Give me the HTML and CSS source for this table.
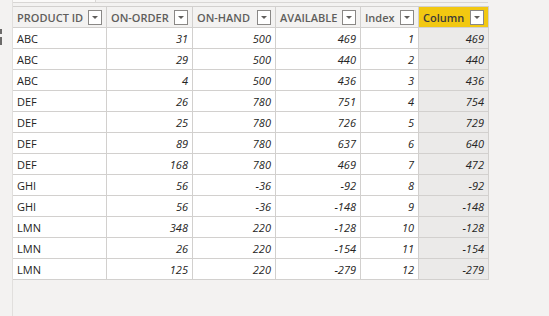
FILE: index.html
```html
<!DOCTYPE html>
<html>
<head>
<meta charset="utf-8">
<link rel="stylesheet" href="styles.css">
</head>
<body>
<div class="app">
  <div class="rail">
    <span class="rail-mark a"></span>
    <span class="rail-mark b"></span>
  </div>
  <div class="main">
    <div class="topbar"><span class="topbar-cell"></span></div>
    <div class="grid">
      <div class="hcell"><span>PRODUCT ID</span><i class="filter"></i></div>
      <div class="hcell"><span>ON-ORDER</span><i class="filter"></i></div>
      <div class="hcell"><span>ON-HAND</span><i class="filter"></i></div>
      <div class="hcell"><span>AVAILABLE</span><i class="filter"></i></div>
      <div class="hcell"><span>Index</span><i class="filter"></i></div>
      <div class="hcell sel"><span>Column</span><i class="filter"></i></div>

      <div class="cell txt">ABC</div><div class="cell num">31</div><div class="cell num">500</div><div class="cell num">469</div><div class="cell num">1</div><div class="cell num last">469</div>
      <div class="cell txt">ABC</div><div class="cell num">29</div><div class="cell num">500</div><div class="cell num">440</div><div class="cell num">2</div><div class="cell num last">440</div>
      <div class="cell txt">ABC</div><div class="cell num">4</div><div class="cell num">500</div><div class="cell num">436</div><div class="cell num">3</div><div class="cell num last">436</div>
      <div class="cell txt">DEF</div><div class="cell num">26</div><div class="cell num">780</div><div class="cell num">751</div><div class="cell num">4</div><div class="cell num last">754</div>
      <div class="cell txt">DEF</div><div class="cell num">25</div><div class="cell num">780</div><div class="cell num">726</div><div class="cell num">5</div><div class="cell num last">729</div>
      <div class="cell txt">DEF</div><div class="cell num">89</div><div class="cell num">780</div><div class="cell num">637</div><div class="cell num">6</div><div class="cell num last">640</div>
      <div class="cell txt">DEF</div><div class="cell num">168</div><div class="cell num">780</div><div class="cell num">469</div><div class="cell num">7</div><div class="cell num last">472</div>
      <div class="cell txt">GHI</div><div class="cell num">56</div><div class="cell num">-36</div><div class="cell num">-92</div><div class="cell num">8</div><div class="cell num last">-92</div>
      <div class="cell txt">GHI</div><div class="cell num">56</div><div class="cell num">-36</div><div class="cell num">-148</div><div class="cell num">9</div><div class="cell num last">-148</div>
      <div class="cell txt">LMN</div><div class="cell num">348</div><div class="cell num">220</div><div class="cell num">-128</div><div class="cell num">10</div><div class="cell num last">-128</div>
      <div class="cell txt">LMN</div><div class="cell num">26</div><div class="cell num">220</div><div class="cell num">-154</div><div class="cell num">11</div><div class="cell num last">-154</div>
      <div class="cell txt">LMN</div><div class="cell num">125</div><div class="cell num">220</div><div class="cell num">-279</div><div class="cell num">12</div><div class="cell num last">-279</div>
    </div>
  </div>
</div>
</body>
</html>
```

FILE: styles.css
```css
html, body {
  margin: 0;
  padding: 0;
  background: #f3f2f1;
  font-family: "Open Sans", "Noto Sans", sans-serif;
}

.app {
  display: flex;
  width: 549px;
  height: 316px;
  overflow: hidden;
}

.rail {
  width: 12px;
  flex: none;
  border-right: 1px solid #e1dfdd;
  background: #f3f2f1;
  position: relative;
}

.rail-mark {
  position: absolute;
  left: 0;
  width: 2px;
  background: #6b6a69;
}
.rail-mark.a { top: 29px; height: 5px; }
.rail-mark.b { top: 37px; height: 8px; }

.main {
  flex: 1;
  display: flex;
  flex-direction: column;
}

.topbar {
  width: 475px;
  height: 2px;
  border-bottom: 1px solid #d8d6d4;
  display: flex;
}
.topbar-cell {
  width: 82px;
  background: #faf9f8;
  border-right: 1px solid #d8d6d4;
}

.grid {
  margin-top: 3px;
  display: grid;
  grid-template-columns: 94px 86px 83px 85px 58px 70px;
  grid-auto-rows: 21px;
  width: 476px;
  border-top: 1px solid #d2d0ce;
}

.hcell {
  box-sizing: border-box;
  display: flex;
  align-items: center;
  justify-content: space-between;
  padding: 0 4px 0 4px;
  border-right: 1px solid #d2d0ce;
  border-bottom: 1px solid #d2d0ce;
  background: #f3f2f1;
  color: #605e5c;
  font-size: 11px;
  font-weight: 600;
  white-space: nowrap;
}

.hcell.sel {
  background: #f2c811;
  color: #3b3a39;
}

.filter {
  box-sizing: border-box;
  width: 14px;
  height: 15px;
  border: 1px solid #8a8886;
  background: #ffffff;
  position: relative;
  flex: none;
}
.filter::after {
  content: "";
  position: absolute;
  left: 3px;
  top: 5px;
  border-left: 3px solid transparent;
  border-right: 3px solid transparent;
  border-top: 3px solid #605e5c;
}

.cell {
  box-sizing: border-box;
  display: flex;
  align-items: center;
  padding: 0 4px 0 4px;
  border-right: 1px solid #d2d0ce;
  border-bottom: 1px solid #d2d0ce;
  background: #ffffff;
  color: #252423;
  font-size: 11px;
  white-space: nowrap;
}

.cell.num {
  justify-content: flex-end;
  font-style: italic;
}

.cell.last {
  background: #ebeae9;
}
```
